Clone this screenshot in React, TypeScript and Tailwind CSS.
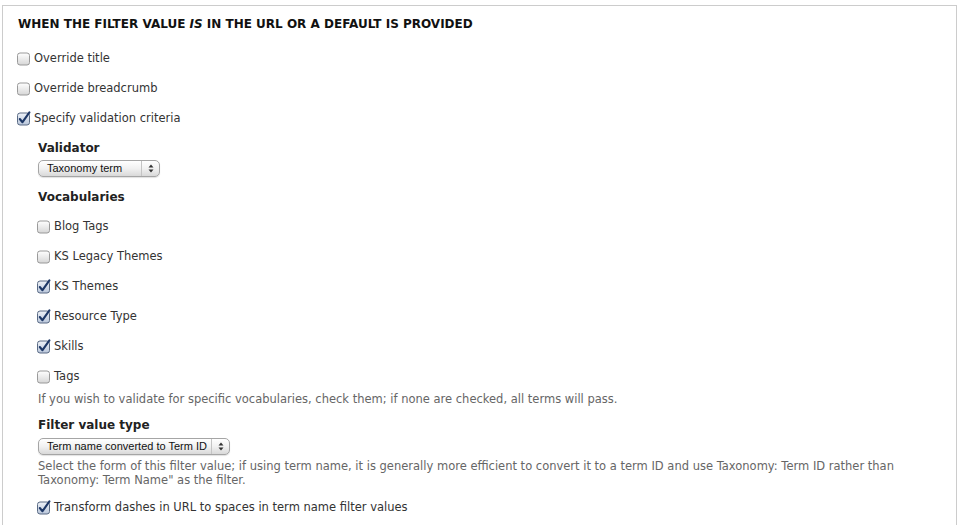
import React from "react";

const font = { fontFamily: '"DejaVu Sans", Verdana, sans-serif' };

function Box({ checked }: { checked?: boolean }) {
  return (
    <svg width="14" height="14" viewBox="0 0 14 14" className="shrink-0 overflow-visible -ml-[1px]">
      <defs>
        <linearGradient id={checked ? "gc" : "gu"} x1="0" y1="0" x2="0" y2="1">
          <stop offset="0" stopColor={checked ? "#eef2f8" : "#ffffff"} />
          <stop offset="1" stopColor={checked ? "#b9c6da" : "#d6d6d6"} />
        </linearGradient>
      </defs>
      <rect x="0.5" y="1" width="12" height="12" rx="2.5" fill={`url(#${checked ? "gc" : "gu"})`} stroke={checked ? "#5a6b85" : "#9a9a9a"} strokeWidth="1" />
      {checked && (
        <path d="M2.8 7 L5.5 10.2 L12.4 0.4" fill="none" stroke="#1d3766" strokeWidth="2.1" strokeLinecap="round" strokeLinejoin="round" />
      )}
    </svg>
  );
}

function Row({ label, checked }: { label: string; checked?: boolean }) {
  return (
    <div className="h-[30px] flex items-center text-[11.5px] text-[#333]">
      <Box checked={checked} />
      <span className="ml-[3px]">{label}</span>
    </div>
  );
}

function Select({ label, width }: { label: string; width: string }) {
  return (
    <div
      className={`${width} h-[17px] rounded-[5px] border border-[#a5a5a5] bg-gradient-to-b from-[#ffffff] via-[#f1f1f1] to-[#d9d9d9] shadow-[0_1px_1px_rgba(0,0,0,0.12)] flex items-center text-[11px] text-[#111] pl-[8px]`}
      style={{ fontFamily: '"Liberation Sans", Arial, sans-serif' }}
    >
      <span className="flex-1 whitespace-nowrap leading-[15px]">{label}</span>
      <span className="h-full w-px bg-[#c4c4c4]" />
      <span className="w-[17px] flex items-center justify-center">
        <svg width="6" height="9" viewBox="0 0 6 9">
          <path d="M3 0.5 L5.5 3.5 L0.5 3.5 Z" fill="#333" />
          <path d="M3 8.5 L5.5 5.5 L0.5 5.5 Z" fill="#333" />
        </svg>
      </span>
    </div>
  );
}

export default function App() {
  return (
    <div className="h-[525px] overflow-hidden bg-white pl-[2px] pt-[5px]" style={font}>
      <div className="w-[955px] h-[600px] border border-[#cccccc] pl-[15px] pt-[10px]">
        <h2 className="h-[16px] leading-[16px] font-bold text-[12px] uppercase text-[#111] whitespace-nowrap">
          When the filter value <em>is</em> in the URL or a default is provided
        </h2>
        <div className="mt-[12px]">
          <Row label="Override title" />
          <Row label="Override breadcrumb" />
          <Row label="Specify validation criteria" checked />
        </div>
        <div className="pl-[20px]">
          <div className="mt-[6px] h-[16px] leading-[16px] font-bold text-[12px] text-[#222]">Validator</div>
          <div className="mt-[4px]">
            <Select label="Taxonomy term" width="w-[122px]" />
          </div>
          <div className="mt-[12px] h-[16px] leading-[16px] font-bold text-[12px] text-[#222]">Vocabularies</div>
          <div className="mt-[7px]">
            <Row label="Blog Tags" />
            <Row label="KS Legacy Themes" />
            <Row label="KS Themes" checked />
            <Row label="Resource Type" checked />
            <Row label="Skills" checked />
            <Row label="Tags" />
          </div>
          <div className="h-[14px] leading-[14px] text-[11.5px] text-[#666] whitespace-nowrap">
            If you wish to validate for specific vocabularies, check them; if none are checked, all terms will pass.
          </div>
          <div className="mt-[11px] h-[16px] leading-[16px] font-bold text-[12px] text-[#222]">Filter value type</div>
          <div className="mt-[5px]">
            <Select label="Term name converted to Term ID" width="w-[192px]" />
          </div>
          <div className="mt-[4px] leading-[14px] text-[11.5px] text-[#666] whitespace-nowrap">
            Select the form of this filter value; if using term name, it is generally more efficient to convert it to a term ID and use Taxonomy: Term ID rather than
            <br />
            Taxonomy: Term Name" as the filter.
          </div>
          <div className="mt-[6px]">
            <Row label="Transform dashes in URL to spaces in term name filter values" checked />
          </div>
        </div>
      </div>
    </div>
  );
}
